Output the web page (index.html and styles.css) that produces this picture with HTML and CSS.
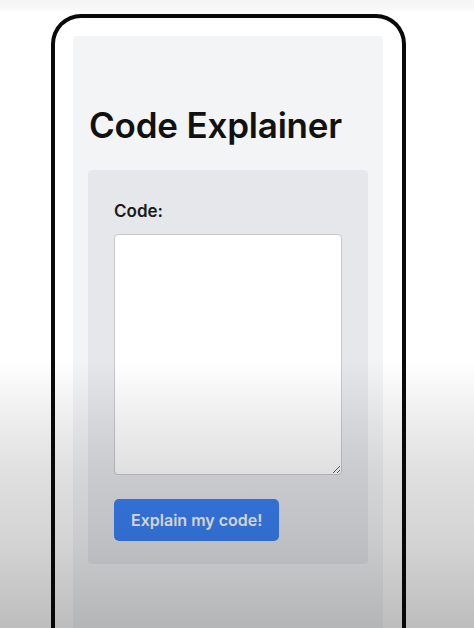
FILE: index.html
```html
<!DOCTYPE html>
<html lang="en">
<head>
<meta charset="utf-8">
<title>Code Explainer</title>
<link rel="stylesheet" href="styles.css">
</head>
<body>
<div class="stage">
  <div class="phone">
    <div class="panel">
      <h1 class="title">Code Explainer</h1>
      <form class="card">
        <label class="label" for="code">Code:</label>
        <textarea class="code" id="code"></textarea>
        <button class="btn" type="button">Explain my code!</button>
      </form>
    </div>
  </div>
  <div class="shade"></div>
</div>
</body>
</html>
```
FILE: styles.css
```css
html, body {
  margin: 0;
  padding: 0;
}
body {
  width: 474px;
  height: 628px;
  overflow: hidden;
  background: linear-gradient(#f5f5f6 0, #f7f7f8 8px, #ffffff 12px);
  font-family: Inter, "Liberation Sans", sans-serif;
}
.stage {
  position: relative;
  height: 628px;
  overflow: hidden;
  padding: 14px 0 0 51px;
  box-sizing: border-box;
}
.phone {
  width: 355px;
  height: 700px;
  box-sizing: border-box;
  border: 4px solid #0a0a0a;
  border-bottom: none;
  border-radius: 30px 30px 0 0;
  background: #fff;
  padding: 18px 19px 0 18px;
}
.panel {
  background: #f3f4f6;
  height: 700px;
  border-radius: 4px 4px 0 0;
  padding: 1px 15px 0 15px;
  box-sizing: border-box;
}
.title {
  margin: 67px 0 0 1px;
  font-size: 35px;
  line-height: 42px;
  font-weight: 600;
  color: #111;
  letter-spacing: -0.2px;
}
.card {
  margin-top: 24px;
  background: #e5e7eb;
  border-radius: 4px;
  padding: 31px 26px 23px 26px;
  display: flex;
  flex-direction: column;
  align-items: flex-start;
}
.label {
  font-size: 17px;
  line-height: 20px;
  font-weight: 600;
  color: #1a1a1a;
  margin-bottom: 13px;
}
.code {
  width: 228px;
  height: 241px;
  box-sizing: border-box;
  border: 1px solid #c9c9cc;
  border-radius: 4px;
  background: #fff;
  margin: 0;
  resize: vertical;
}
.btn {
  margin-top: 24px;
  height: 42px;
  padding: 0 17px 0 17px;
  border: none;
  border-radius: 5px;
  background: #3b82f6;
  color: #f8fafc;
  font-family: inherit;
  font-size: 16px;
  font-weight: 600;
}
.shade {
  position: absolute;
  left: 0;
  top: 0;
  width: 100%;
  height: 100%;
  pointer-events: none;
  background: linear-gradient(to bottom,
    rgba(0,0,0,0) 0,
    rgba(0,0,0,0) 360px,
    rgba(0,0,0,0.06) 410px,
    rgba(0,0,0,0.12) 470px,
    rgba(0,0,0,0.17) 540px,
    rgba(0,0,0,0.26) 628px);
}
```
